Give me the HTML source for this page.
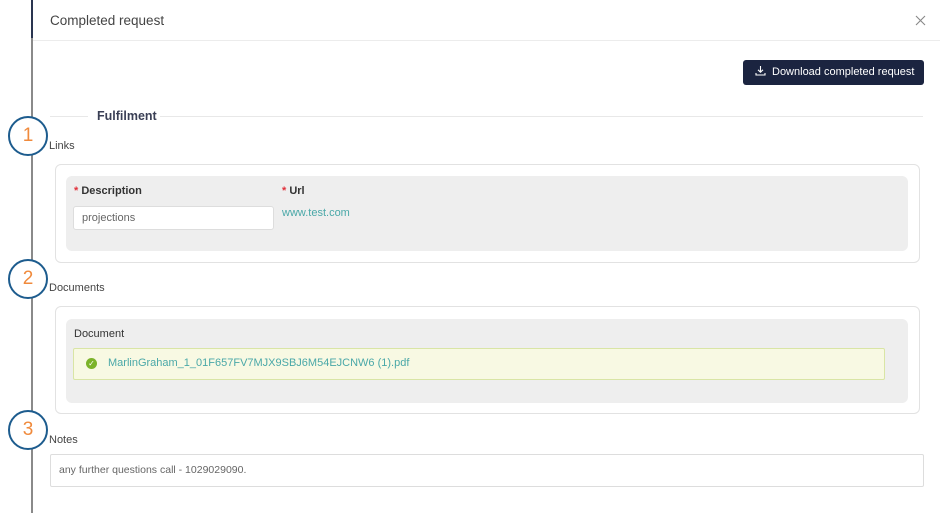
<!DOCTYPE html>
<html><head><meta charset="utf-8"><style>
*{box-sizing:border-box;margin:0;padding:0}
body{width:940px;height:513px;background:#fff;font-family:"Liberation Sans",sans-serif;position:relative;overflow:hidden;color:#333}
.a{position:absolute}
.vl{left:31px;top:0;width:1.5px;height:513px;background:#8a8a8a}
.vt{left:31px;top:0;width:2px;height:38px;background:#2a3550}
.t{font-size:12.5px;white-space:nowrap}
.b{font-weight:bold}
.circ{width:40px;height:40px;border:2px solid #1d5c8e;border-radius:50%;background:#fff;color:#f08a3c;font-size:19px;text-align:center;line-height:36px;font-weight:300}
.box{border:1px solid #e2e2e2;border-radius:6px;background:#fff}
.gr{background:#eeeeee;border-radius:6px}
.req{color:#e0303a}
</style></head><body>
<div class="a vl"></div><div class="a vt"></div>
<div class="a t" style="left:50px;top:13px;font-size:13.5px;color:#444">Completed request</div>
<svg class="a" style="left:915px;top:15px" width="11" height="11" viewBox="0 0 11 11" stroke="#888" stroke-width="1.1"><path d="M1 1l9 9M10 1l-9 9"/></svg>
<div class="a" style="left:33px;top:40px;width:907px;height:1px;background:#ececec"></div>
<div class="a" style="left:743px;top:60px;width:181px;height:25px;background:#1b2440;border-radius:3px;color:#fff;font-size:11px;line-height:25px;padding-left:12px;white-space:nowrap">
<svg width="11" height="11" viewBox="0 0 11 11" style="vertical-align:-1px;margin-right:6px" fill="none" stroke="#fff" stroke-width="1.1"><path d="M5.5 1v6M3 4.8l2.5 2.4 2.5-2.4M1 8v2h9V8"/></svg>Download completed request</div>
<div class="a" style="left:50px;top:116px;width:38px;height:1px;background:#e8e8e8"></div>
<div class="a" style="left:160px;top:116px;width:763px;height:1px;background:#e8e8e8"></div>
<div class="a t b" style="left:97px;top:109px;color:#3a3f55;font-size:12.5px">Fulfilment</div>
<div class="a circ" style="left:8px;top:116px">1</div>
<div class="a circ" style="left:8px;top:259px">2</div>
<div class="a circ" style="left:8px;top:410px">3</div>
<div class="a t" style="left:49px;top:140px;font-size:11px;color:#444">Links</div>
<div class="a box" style="left:55px;top:164px;width:865px;height:99px"></div>
<div class="a gr" style="left:66px;top:176px;width:842px;height:75px"></div>
<div class="a t b" style="left:74px;top:185px;font-size:11px;color:#333"><span class="req">*</span> Description</div>
<div class="a t b" style="left:282px;top:185px;font-size:11px;color:#333"><span class="req">*</span> Url</div>
<div class="a" style="left:73px;top:206px;width:201px;height:24px;background:#fff;border:1px solid #ddd;border-radius:3px;font-size:11px;color:#666;padding-left:8px;line-height:22px">projections</div>
<div class="a t" style="left:282px;top:207px;font-size:11px;color:#4aa8a8">www.test.com</div>
<div class="a t" style="left:49px;top:282px;font-size:11px;color:#444">Documents</div>
<div class="a box" style="left:55px;top:306px;width:865px;height:108px"></div>
<div class="a gr" style="left:66px;top:319px;width:842px;height:84px"></div>
<div class="a t" style="left:74px;top:328px;font-size:11px;color:#333">Document</div>
<div class="a" style="left:73px;top:348px;width:812px;height:32px;background:#f8f9e3;border:1px solid #d9e5a5;border-radius:2px"></div>
<div class="a" style="left:86px;top:358px;width:11px;height:11px;border-radius:50%;background:#7cb32a;color:#fff;font-size:8px;text-align:center;line-height:11px">✓</div>
<div class="a t" style="left:108px;top:357px;font-size:11px;color:#4aa8a8">MarlinGraham_1_01F657FV7MJX9SBJ6M54EJCNW6 (1).pdf</div>
<div class="a t" style="left:49px;top:434px;font-size:11px;color:#444">Notes</div>
<div class="a" style="left:50px;top:454px;width:874px;height:33px;border:1px solid #ddd;border-radius:2px;font-size:10.5px;color:#666;padding-left:8px;line-height:31px">any further questions call - 1029029090.</div>
</body></html>
